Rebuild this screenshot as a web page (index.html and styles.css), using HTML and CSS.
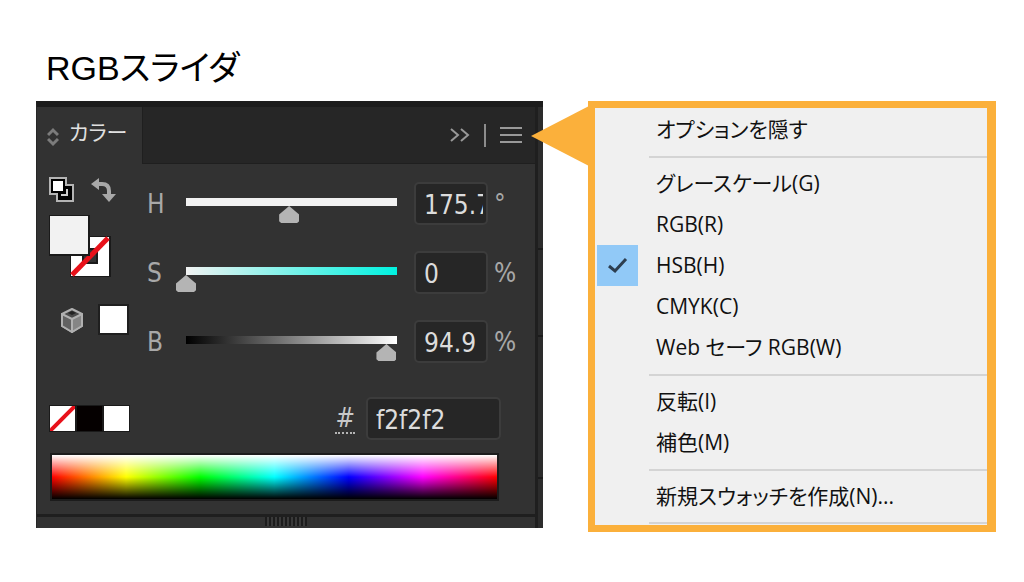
FILE: index.html
```html
<!DOCTYPE html>
<html lang="ja">
<head>
    <meta charset="UTF-8">
    <meta name="viewport" content="width=device-width, initial-scale=1.0">
    <title>RGBスライダ</title>
    <link rel="stylesheet" href="styles.css">
</head>
<body>
    <h1 class="title">RGBスライダ</h1>
    <main class="layout">
        <section class="panel">
            <div class="panel-main">
                <header class="panel-header">
                    <button class="tab">
                        <svg width="12" height="20" viewBox="0 0 12 20" fill="none" stroke="#7c7c7c" stroke-width="3"><path d="M1 8l5-5 5 5M1 12l5 5 5-5"/></svg>
                        カラー
                    </button>
                    <div class="header-tools">
                        <button class="icon-button" aria-label="折りたたむ">
                            <svg width="20" height="16" viewBox="0 0 20 16" fill="none" stroke="#999" stroke-width="2"><path d="M1 2l7 6-7 6M11 2l7 6-7 6"/></svg>
                        </button>
                        <span class="divider"></span>
                        <button class="icon-button" aria-label="メニュー">
                            <svg width="22" height="16" viewBox="0 0 22 16" stroke="#999" stroke-width="2"><path d="M0 1h22M0 8h22M0 15h22"/></svg>
                        </button>
                    </div>
                </header>

                <div class="panel-body">
                    <div class="mixer">
                        <div class="tools">
                            <div class="tool-row">
                                <button class="icon-button" aria-label="初期設定">
                                    <svg width="26" height="26" viewBox="0 0 26 26">
                                        <path d="M0 0h18v7h7v18H7v-7H0z" fill="#b4b4b4"/>
                                        <path d="M2 2h14v7h7v14H9v-7H2z" fill="#000"/>
                                        <path d="M4 4h10v10H4z" fill="#fff"/>
                                        <path d="M18 12v6h-6" fill="none" stroke="#ccc" stroke-width="2"/>
                                    </svg>
                                </button>
                                <button class="icon-button" aria-label="入れ替え">
                                    <svg width="26" height="26" viewBox="0 0 26 26">
                                        <path d="M6 7h5q7 0 7 7v5" fill="none" stroke="#a8a8a8" stroke-width="4"/>
                                        <path d="M0 7l8-6v12zM11 17h14l-7 8z" fill="#a8a8a8"/>
                                    </svg>
                                </button>
                            </div>
                            <button class="icon-button fill-stroke" aria-label="塗りと線">
                                <svg width="62" height="63" viewBox="0 0 62 63">
                                    <path d="M21 21h41v41H21z" fill="#1a1a1a"/>
                                    <path d="M22 22h38v39H22z" fill="#fff"/>
                                    <path d="M33 33h16v16H33z" fill="#1a1a1a"/>
                                    <path d="M35 35h12v12H35z" fill="#323232"/>
                                    <path d="M23 60L59 23" stroke="#e8111a" stroke-width="5"/>
                                    <path d="M0 0h41v41H0z" fill="#1a1a1a"/>
                                    <path d="M1 1h38v38H1z" fill="#f2f2f2"/>
                                </svg>
                            </button>
                            <div class="tool-row web-safe">
                                <button class="icon-button" aria-label="Web カラー">
                                    <svg width="24" height="26" viewBox="0 0 24 26" stroke="#b0b0b0" stroke-width="2" stroke-linejoin="round">
                                        <path d="M12 2l10 5v12l-10 6-10-6V7z" fill="#4a4a4a"/>
                                        <path d="M2 7l10 5v13L2 19z" fill="#626262"/>
                                        <path d="M12 12l10-5v12l-10 6z" fill="#858585"/>
                                        <path d="M8 6l4-2 4 2-4 2z" fill="#222" stroke="none"/>
                                    </svg>
                                </button>
                                <button class="swatch" aria-label="白"></button>
                            </div>
                        </div>

                        <div class="sliders">
                            <div class="slider-row">
                                <label for="hue">H</label>
                                <input class="range range-h" id="hue" type="range" min="0" max="360" value="176">
                                <input class="field" type="text" value="175.7" aria-label="H の値">
                                <span class="unit">°</span>
                            </div>
                            <div class="slider-row">
                                <label for="sat">S</label>
                                <input class="range range-s" id="sat" type="range" min="0" max="100" value="0">
                                <input class="field" type="text" value="0" aria-label="S の値">
                                <span class="unit">%</span>
                            </div>
                            <div class="slider-row">
                                <label for="bri">B</label>
                                <input class="range range-b" id="bri" type="range" min="0" max="100" value="95">
                                <input class="field" type="text" value="94.9" aria-label="B の値">
                                <span class="unit">%</span>
                            </div>
                        </div>
                    </div>

                    <div class="hex-row">
                        <div class="swatches">
                            <button class="chip none" aria-label="なし">
                                <svg width="25" height="25" viewBox="0 0 25 25"><path d="M0 25L25 0" stroke="#e8111a" stroke-width="4"/></svg>
                            </button>
                            <button class="chip black" aria-label="黒"></button>
                            <button class="chip" aria-label="白"></button>
                        </div>
                        <div class="hex">
                            <label for="hex">#</label>
                            <input class="field hex-field" id="hex" type="text" value="f2f2f2">
                        </div>
                    </div>

                    <div class="spectrum"></div>
                </div>

                <footer class="panel-footer"><span class="grip"></span></footer>
            </div>
            <div class="dock">
                <span></span><span></span><span></span><span></span>
            </div>
        </section>

        <nav class="menu">
            <svg class="pointer" width="58" height="60" viewBox="0 0 58 60"><path d="M0 30L58 0v60z" fill="#fbb03b"/></svg>
            <button class="item">オプションを隠す</button>
            <hr>
            <button class="item">グレースケール(G)</button>
            <button class="item">RGB(R)</button>
            <button class="item">
                <span class="check"><svg width="20" height="16" viewBox="0 0 20 16" fill="none" stroke="#2d3e50" stroke-width="3"><path d="M1 8l6 5L18 1"/></svg></span>
                HSB(H)
            </button>
            <button class="item">CMYK(C)</button>
            <button class="item">Web セーフ RGB(W)</button>
            <hr>
            <button class="item">反転(I)</button>
            <button class="item">補色(M)</button>
            <hr>
            <button class="item">新規スウォッチを作成(N)...</button>
            <hr class="last">
        </nav>
    </main>
</body>
</html>
```

FILE: styles.css
```css
* {
    box-sizing: border-box;
}
body {
    margin: 0;
    padding: 44px 28px 0 36px;
    background-color: #fff;
    font-family: "Open Sans", "Noto Sans CJK JP", sans-serif;
    font-feature-settings: "palt";
}
button, input {
    margin: 0;
    padding: 0;
    border: none;
    background: none;
    font: inherit;
    font-feature-settings: inherit;
    color: inherit;
}
svg {
    display: block;
}
.title {
    margin: 0 0 9px;
    padding-left: 10px;
    font-family: "Liberation Sans", "Noto Sans CJK JP", sans-serif;
    font-size: 34px;
    line-height: 48px;
    font-weight: 400;
    color: #000;
}
.layout {
    display: grid;
    grid-template-columns: 507fr 408fr;
    align-items: start;
    gap: 45px;
}

/* color panel */
.panel {
    min-width: 0;
    display: flex;
    background-color: #323232;
    border-top: 6px solid #1c1c1c;
    border-left: 1px solid #262626;
    color: #a8a8a8;
    font-family: "DejaVu Sans Condensed", "Noto Sans CJK JP", sans-serif;
    font-size: 26px;
}
.panel-main {
    flex: 1;
    min-width: 0;
    border-right: 3px solid #1f1f1f;
}
.panel-header {
    display: flex;
    height: 57px;
}
.tab {
    display: flex;
    align-items: center;
    gap: 10px;
    width: 105px;
    padding: 0 0 10px 10px;
    font-size: 21px;
    color: #e0e0e0;
    white-space: nowrap;
}
.tab svg {
    margin-top: 12px;
}
.header-tools {
    flex: 1;
    display: flex;
    align-items: center;
    justify-content: flex-end;
    gap: 14px;
    padding-right: 13px;
    background-color: #262626;
    border-left: 1px solid #1f1f1f;
    border-bottom: 1px solid #1f1f1f;
}
.divider {
    width: 2px;
    height: 23px;
    background-color: #8c8c8c;
}
.panel-body {
    padding: 13px 15px 13px 12px;
}
.mixer {
    display: flex;
    gap: 18px;
}
.tools {
    width: 80px;
}
.tool-row {
    display: flex;
    align-items: center;
    gap: 16px;
}
.fill-stroke {
    display: block;
    margin-top: 12px;
}
.web-safe {
    gap: 14px;
    margin-top: 26px;
    padding-left: 11px;
}
.swatch {
    width: 31px;
    height: 31px;
    background-color: #fff;
    border: 2px solid #1f1f1f;
}
.sliders {
    flex: 1;
    min-width: 0;
    display: flex;
    flex-direction: column;
    gap: 26px;
    padding-top: 5px;
}
.slider-row {
    display: flex;
    align-items: center;
    height: 43px;
}
.slider-row label {
    width: 29px;
}
.range {
    -webkit-appearance: none;
    appearance: none;
    flex: 1;
    align-self: flex-end;
    min-width: 0;
    height: 27px;
    margin-right: 7px;
    background-repeat: no-repeat;
    background-position: center top;
    background-size: calc(100% - 20px) 8px;
}
.range::-webkit-slider-runnable-track {
    height: 27px;
}
.range::-webkit-slider-thumb {
    -webkit-appearance: none;
    width: 20px;
    height: 17px;
    margin-top: 8px;
    background-color: #b4b4b4;
    clip-path: polygon(50% 0, 100% 50%, 100% 90%, 90% 100%, 10% 100%, 0 90%, 0 50%);
}
.range-h {
    background-image: linear-gradient(#f2f2f2, #f2f2f2);
}
.range-s {
    background-image: linear-gradient(to right, #f2f2f2, #00f2e0);
}
.range-b {
    background-image: linear-gradient(to right, #000, #fff);
}
.field {
    width: 74px;
    height: 43px;
    padding: 2px 3px 0 8px;
    background-color: #262626;
    border: 2px solid #3c3c3c;
    border-radius: 5px;
    color: #dcdcdc;
}
.unit {
    width: 26px;
    margin-left: 6px;
}
.hex-row {
    display: flex;
    justify-content: space-between;
    align-items: center;
    margin: 34px 19px 13px 0;
}
.swatches {
    display: flex;
    gap: 2px;
    padding: 1px;
    background-color: #1a1a1a;
}
.chip {
    width: 25px;
    height: 25px;
    background-color: #fff;
    overflow: hidden;
}
.chip.black {
    background-color: #050000;
}
.hex {
    display: flex;
    align-items: center;
    gap: 11px;
}
.hex label {
    line-height: 28px;
    border-bottom: 2px dotted #b4b4b4;
    color: #c8c8c8;
}
.hex-field {
    width: 135px;
}
.spectrum {
    height: 48px;
    margin: 0 21px 0 1px;
    border: 2px solid #1c1c1c;
    background: linear-gradient(#fff, rgba(255, 255, 255, 0) 50%, rgba(0, 0, 0, 0) 50%, #000), linear-gradient(to right, #f00, #ff0, #0f0, #0ff, #00f, #f0f, #f00);
}
.panel-footer {
    height: 14px;
    border-top: 3px solid #1f1f1f;
}
.grip {
    display: block;
    width: 42px;
    height: 9px;
    margin: 0 auto;
    background: repeating-linear-gradient(to right, #1c1c1c 0 2px, #3a3a3a 2px 4px);
}
.dock {
    width: 5px;
    display: flex;
    flex-direction: column;
    background-color: #2c2c2c;
}
.dock span {
    flex: 142;
    border-bottom: 2px solid #1c1c1c;
}
.dock span:nth-child(2) {
    flex: 86;
}
.dock span:last-child {
    flex: 49;
    border: none;
}

/* options menu */
.menu {
    position: relative;
    min-width: 0;
    padding: 1px 0 0 2px;
    background-color: #f0f0f0;
    border: 7px solid #fbb03b;
    border-right-width: 9px;
    color: #111;
    font-size: 21px;
}
.pointer {
    position: absolute;
    top: -2px;
    left: -64px;
}
.item {
    position: relative;
    display: block;
    width: 100%;
    height: 41px;
    padding-left: 59px;
    line-height: 41px;
    text-align: left;
    white-space: nowrap;
}
.check {
    position: absolute;
    top: 0;
    left: 0;
    width: 41px;
    height: 41px;
    display: flex;
    align-items: center;
    justify-content: center;
    background-color: #91c9f7;
}
.menu hr {
    height: 2px;
    margin: 6px 0 5px 52px;
    border: none;
    background-color: #d4d4d4;
}
.menu .last {
    margin: 5px 0 1px 52px;
}
```
